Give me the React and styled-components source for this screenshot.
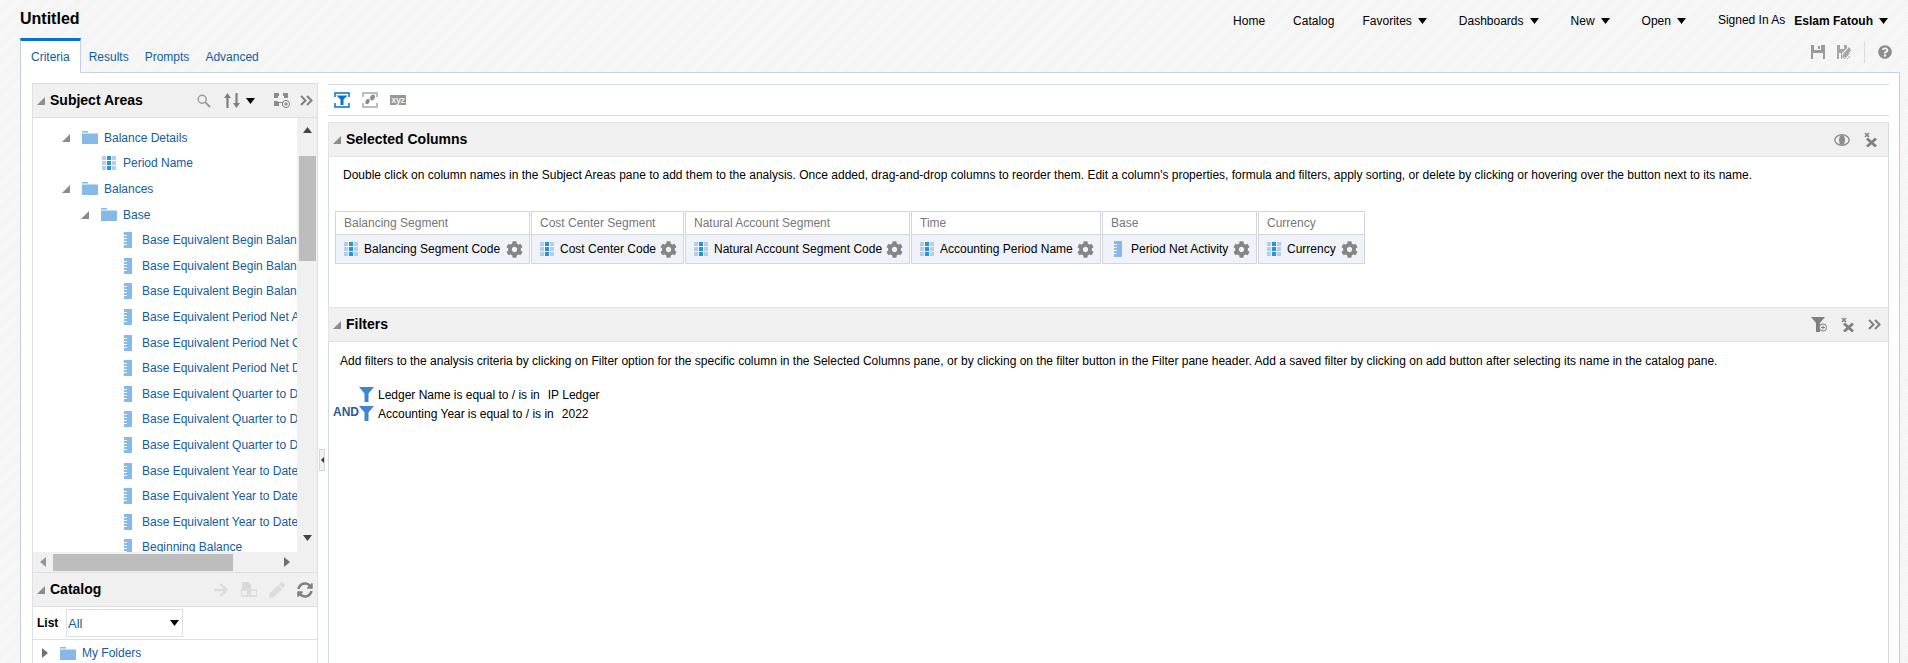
import React from 'react'
import styled, { createGlobalStyle } from 'styled-components'
import { FaCog, FaSyncAlt, FaPen, FaArrowRight, FaQuestionCircle } from 'react-icons/fa'

const GlobalStyle = createGlobalStyle`
  html, body {
    margin: 0;
    padding: 0;
    height: 100%;
    overflow: hidden;
  }
  body {
    font-family: "Liberation Sans", Arial, sans-serif;
    font-size: 12px;
    color: #000;
  }
`

/* ---------- drawn icons ---------- */

const Corner = ({ size = 8 }) => (
  <svg width={size} height={size} viewBox="0 0 8 8">
    <polygon points="8,0 8,8 0,8" fill="#8c8c8c" />
  </svg>
)

const RightArrow = () => (
  <svg width="6" height="10" viewBox="0 0 6 10">
    <polygon points="0,0 6,5 0,10" fill="#6f6f6f" />
  </svg>
)

const Caret = ({ color = '#000', up }) => (
  <svg width="9" height="6" viewBox="0 0 9 6">
    <polygon points={up ? '0,6 9,6 4.5,0' : '0,0 9,0 4.5,6'} fill={color} />
  </svg>
)

const Folder = () => (
  <svg width="16" height="13" viewBox="0 0 16 13">
    <rect x="0" y="0" width="6" height="1.5" fill="#85b9e8" />
    <rect x="0" y="2.5" width="16" height="10.5" fill="#85b9e8" />
  </svg>
)

const Grid = () => (
  <svg width="14" height="14" viewBox="0 0 14 14">
    {[0, 5, 10].map(x =>
      [0, 5, 10].map(y => (
        <rect
          key={`${x}-${y}`}
          x={x}
          y={y}
          width="4"
          height="4"
          fill={x === 5 ? '#2496d8' : '#b3cee6'}
        />
      ))
    )}
  </svg>
)

const Measure = () => (
  <svg width="8" height="16" viewBox="0 0 8 16">
    <rect width="8" height="16" fill="#85b9e8" />
    <rect y="3" width="3" height="1" fill="#fff" />
    <rect y="6" width="3" height="1" fill="#fff" />
    <rect y="9" width="3" height="1" fill="#fff" />
    <rect y="12" width="3" height="1" fill="#fff" />
  </svg>
)

const Funnel = () => (
  <svg width="15" height="15" viewBox="0 0 15 15">
    <polygon points="0,0 15,0 9.5,6.5 9.5,15 5.5,15 5.5,6.5" fill="#3b86cf" />
  </svg>
)

const FunnelAdd = () => (
  <svg width="16" height="15" viewBox="0 0 16 15">
    <polygon points="0,0 14,0 9,6 9,15 5,15 5,6" fill="#808080" />
    <circle cx="12" cy="10.5" r="3.6" fill="#f0f0f0" stroke="#808080" strokeWidth="1" />
    <path d="M10 10.5h4M12 8.5v4" stroke="#808080" strokeWidth="1" />
  </svg>
)

const Search = () => (
  <svg width="14" height="14" viewBox="0 0 14 14" fill="none" stroke="#999">
    <circle cx="5.2" cy="5.2" r="4" strokeWidth="1.4" />
    <path d="M8.4 8.4L13 13" strokeWidth="2" />
  </svg>
)

const Sort = () => (
  <svg width="16" height="15" viewBox="0 0 16 15" fill="#808080">
    <path d="M3.5 0L7 5H4.6V15H2.4V5H0z" />
    <path d="M12.5 15L9 10H11.4V0H13.6V10H16z" />
  </svg>
)

const AddSelect = () => (
  <svg width="16" height="15" viewBox="0 0 16 15">
    <rect width="14" height="13" fill="#8c8c8c" />
    <rect x="4" y="3" width="6" height="6" fill="#f0f0f0" />
    <path d="M5 0h4v3H5zM0 5h4v3H0zM10 5h4v3h-4zM5 10h3v3H5z" fill="#f0f0f0" />
    <circle cx="12" cy="11" r="3.6" fill="#f0f0f0" stroke="#808080" />
    <path d="M10 11h4M12 9v4" stroke="#808080" />
  </svg>
)

const Chevrons = () => (
  <svg width="13" height="11" viewBox="0 0 13 11" fill="none" stroke="#808080" strokeWidth="2">
    <path d="M1 1l4.5 4.5L1 10M7 1l4.5 4.5L7 10" />
  </svg>
)

const FilterTool = () => (
  <svg width="16" height="16" viewBox="0 0 16 16">
    <path d="M1 5V1H15V5M1 11V15H15V11" fill="none" stroke="#0572ce" strokeWidth="1.5" />
    <polygon points="2.5,3.5 13.5,3.5 9.5,7.5 9.5,13 6.5,13 6.5,7.5" fill="#0572ce" />
  </svg>
)

const StepsTool = () => (
  <svg width="16" height="16" viewBox="0 0 16 16">
    <path d="M1 5V1H15V5M1 11V15H15V11" fill="none" stroke="#a8a8a8" strokeWidth="1.5" />
    <ellipse cx="10.5" cy="5.5" rx="2.2" ry="3" transform="rotate(25 10.5 5.5)" fill="#8c8c8c" />
    <ellipse cx="5.5" cy="9.5" rx="2" ry="2.8" transform="rotate(25 5.5 9.5)" fill="#8c8c8c" />
  </svg>
)

const Floppy = () => (
  <svg width="14" height="14" viewBox="0 0 14 14">
    <path d="M0 0h14v14H0z" fill="#9a9a9a" />
    <rect x="3" y="0" width="7" height="5" fill="#f4f4f4" />
    <rect x="7" y="1" width="2" height="3" fill="#9a9a9a" />
    <rect x="2" y="8" width="10" height="6" fill="#f4f4f4" />
  </svg>
)

const FloppyEdit = () => (
  <svg width="14" height="14" viewBox="0 0 14 14">
    <path d="M0 0h10v3L5 8v6H0z" fill="#a6a6a6" />
    <rect x="3" y="0" width="4" height="4" fill="#f4f4f4" />
    <rect x="2" y="8" width="2" height="6" fill="#f4f4f4" />
    <path d="M12 2L6 9l-1 4 4-1 5-7z" fill="#a6a6a6" />
    <path d="M7 14l6-6M10 14l3-3" stroke="#a6a6a6" />
  </svg>
)

const EyeRings = () => (
  <svg width="16" height="12" viewBox="0 0 16 12">
    <ellipse cx="8" cy="6" rx="7.2" ry="5.2" fill="none" stroke="#8c8c8c" strokeWidth="1.4" />
    <ellipse cx="8" cy="6" rx="3" ry="5" fill="#8c8c8c" />
  </svg>
)

const RemoveAll = () => (
  <svg width="13" height="15" viewBox="0 0 13 15" fill="none" stroke="#808080">
    <path d="M1 1l4 4M5 1L1 5" strokeWidth="1.5" />
    <path d="M3 6.5l9 8M12 6.5l-9 8" strokeWidth="2.8" />
  </svg>
)

const ReportDoc = () => (
  <svg width="16" height="15" viewBox="0 0 16 15">
    <path d="M1 0h6l3 3v4H1z" fill="#d8d8d8" />
    <rect x="0" y="8" width="7" height="6" fill="none" stroke="#d8d8d8" strokeWidth="1.5" />
    <rect x="9" y="8" width="7" height="6" fill="none" stroke="#d8d8d8" strokeWidth="1.5" />
    <rect x="6" y="9" width="4" height="1.5" fill="#d8d8d8" />
  </svg>
)

const Xyz = styled.span`
  display: inline-block;
  width: 16px;
  height: 10px;
  line-height: 10px;
  background: #999;
  color: #f0f0f0;
  font-size: 9px;
  font-weight: bold;
  text-align: center;
  letter-spacing: -0.3px;
`

/* ---------- page frame ---------- */

const Page = styled.div`
  height: 100vh;
  display: flex;
  flex-direction: column;
  padding: 0 8px 0 20px;
  box-sizing: border-box;
  background: repeating-linear-gradient(
    135deg,
    #f8f8f8 0,
    #f8f8f8 1px,
    #f3f3f3 1px,
    #f3f3f3 2px
  );
`

const TopBar = styled.header`
  height: 38px;
  flex: none;
  display: flex;
  align-items: flex-start;
  justify-content: space-between;
`

const Title = styled.h1`
  margin: 10px 0 0;
  font-size: 16px;
  line-height: 18px;
  font-weight: bold;
`

const Nav = styled.nav`
  display: flex;
  align-items: center;
  height: 41px;
  padding-right: 12px;
`

const NavItem = styled.span`
  display: flex;
  align-items: center;
  gap: 6px;
  padding: 0 ${p => (p.$caret ? '18px' : '14px')} 0 14px;
`

const SignedIn = styled.span`
  padding-left: 14px;
  margin-top: -1px;
`

const UserName = styled.span`
  display: flex;
  align-items: center;
  gap: 6px;
  margin-left: 9px;
  font-weight: bold;
`

const TabRow = styled.div`
  height: 34px;
  flex: none;
  display: flex;
  position: relative;
  z-index: 1;
`

const Tab = styled.div`
  display: flex;
  align-items: center;
  box-sizing: border-box;
  height: ${p => (p.$active ? '35px' : '34px')};
  padding: ${p => (p.$active ? '0 10px' : '3px 8px 0')};
  color: #145c9e;
  ${p =>
    p.$active &&
    `
    background: #fff;
    border-top: 3px solid #0572ce;
    border-left: 1px solid #c4d0df;
    border-right: 1px solid #c4d0df;
  `}
`

const Tools = styled.div`
  margin-left: auto;
  display: flex;
  align-items: center;
  height: 28px;
  padding-right: 8px;
  svg {
    display: block;
  }
`

const ToolGap = styled.span`
  width: 12px;
`

const ToolDivider = styled.span`
  width: 1px;
  height: 21px;
  margin: 0 13px;
  background: #dcdcdc;
`

const Workspace = styled.main`
  flex: 1;
  min-height: 0;
  display: flex;
  box-sizing: border-box;
  padding: 10px 10px 0 11px;
  background: #fff;
  border: 1px solid #c4d0df;
  border-bottom: 0;
`

/* ---------- left pane ---------- */

const LeftPane = styled.aside`
  width: 286px;
  flex: none;
  display: flex;
  flex-direction: column;
  box-sizing: border-box;
  border: 1px solid #dcdfe3;
  border-bottom: 0;
`

const PaneHead = styled.div`
  height: 34px;
  flex: none;
  box-sizing: border-box;
  display: flex;
  align-items: center;
  padding: 0 4px;
  background: #f0f0f0;
  border-bottom: 1px solid #dcdfe3;
`

const HeadTitle = styled.span`
  margin: 0 0 2px 5px;
  font-size: 14px;
  font-weight: bold;
`

const HeadIcons = styled.div`
  margin-left: auto;
  display: flex;
  align-items: center;
`

const HeadIcon = styled.span`
  display: flex;
  margin-left: ${p => p.$gap}px;
  color: ${p => p.$color};
  font-size: 16px;
`

const TreeArea = styled.div`
  height: 434px;
  flex: none;
  display: flex;
  overflow: hidden;
`

const TreeList = styled.div`
  flex: 1;
  min-width: 0;
  overflow: hidden;
  padding-top: 7px;
`

const TreeRow = styled.div`
  height: 25.6px;
  display: flex;
  align-items: center;
  padding-left: ${p => p.$indent}px;
  white-space: nowrap;
  color: #145c9e;
`

const Twist = styled.span`
  width: ${p => p.$width || 20}px;
  flex: none;
  display: flex;
`

const TreeIcon = styled.span`
  flex: none;
  display: flex;
  margin-right: ${p => p.$gap}px;
`

const VScroll = styled.div`
  width: 20px;
  flex: none;
  box-sizing: border-box;
  padding: 9px 1px 0 2px;
  background: #f0f0f0;
  display: flex;
  flex-direction: column;
  align-items: center;
`

const VThumb = styled.div`
  width: 17px;
  height: 105px;
  margin-top: 23px;
  background: #bdbdbd;
`

const VDown = styled.div`
  margin-top: 274px;
  display: flex;
`

const HScroll = styled.div`
  height: 21px;
  flex: none;
  display: flex;
  align-items: center;
  background: #f0f0f0;
  border-bottom: 1px solid #dcdfe3;
  box-sizing: border-box;
  padding-left: 7px;
`

const HThumb = styled.div`
  width: 180px;
  height: 17px;
  margin: 0 51px 0 7px;
  background: #bdbdbd;
`

const Flip = styled.span`
  display: flex;
  transform: ${p => (p.$left ? 'rotate(180deg)' : 'none')};
  opacity: ${p => (p.$left ? 0.7 : 1)};
`

const ListRow = styled.div`
  height: 33px;
  flex: none;
  box-sizing: border-box;
  display: flex;
  align-items: center;
  padding-left: 4px;
  border-bottom: 1px solid #dcdfe3;
`

const ListLabel = styled.label`
  width: 29px;
  font-weight: bold;
`

const FakeSelect = styled.div`
  width: 117px;
  height: 28px;
  box-sizing: border-box;
  display: flex;
  align-items: center;
  justify-content: space-between;
  padding: 0 3px 0 1px;
  border: 1px solid #dcdfe3;
  color: #145c9e;
  font-size: 13px;
`

const FolderRow = styled.div`
  flex: 1;
  display: flex;
  align-items: center;
  padding: 3px 0 0 9px;
  color: #145c9e;
`

/* ---------- right pane ---------- */

const Gutter = styled.div`
  width: 10px;
  flex: none;
  padding-top: 366px;
  box-sizing: border-box;
`

const SplitHandle = styled.div`
  width: 6px;
  height: 22px;
  margin-left: 1px;
  box-sizing: border-box;
  border: 1px solid #d4d8de;
  background: #f2f2f2;
  display: flex;
  align-items: center;
  justify-content: center;
  &::before {
    content: '';
    border: 3px solid transparent;
    border-right: 3px solid #333;
    border-left: 0;
  }
`

const RightPane = styled.section`
  flex: 1;
  min-width: 0;
  display: flex;
  flex-direction: column;
  padding-top: 1px;
`

const Toolbar = styled.div`
  height: 32px;
  flex: none;
  box-sizing: border-box;
  display: flex;
  align-items: center;
  gap: 12px;
  padding-left: 6px;
  border-top: 1px solid #d4dbe4;
  border-bottom: 1px solid #d4dbe4;
  svg {
    display: block;
  }
`

const PanelHead = styled.div`
  height: 35px;
  flex: none;
  box-sizing: border-box;
  display: flex;
  align-items: center;
  gap: 5px;
  padding: 0 ${p => p.$right}px 0 4px;
  background: #f0f0f0;
  border: 1px solid #e2e4e8;
  border-right-color: #d4dbe4;
  margin-top: ${p => p.$top || 0}px;
`

const PanelTitle = styled.span`
  margin-bottom: 2px;
  font-size: 14px;
  font-weight: bold;
`

const PanelIcons = styled.div`
  margin-left: auto;
  display: flex;
  align-items: center;
  gap: 14px;
  svg {
    display: block;
  }
`

const PanelBody = styled.div`
  box-sizing: border-box;
  height: ${p => p.$height};
  flex: ${p => (p.$grow ? 1 : 'none')};
  padding-top: ${p => p.$pad}px;
  border-left: 1px solid #d4dbe4;
  border-right: 1px solid #d4dbe4;
`

const Hint = styled.p`
  margin: 0 0 0 ${p => p.$left}px;
  line-height: 14px;
  white-space: nowrap;
`

const ColumnStrip = styled.div`
  display: flex;
  gap: 1px;
  margin: 29px 0 0 6px;
`

const ColumnCard = styled.div`
  width: ${p => p.$width}px;
  box-sizing: border-box;
  border: 1px solid #d5d5dc;
`

const ColumnFolder = styled.div`
  height: 23px;
  box-sizing: border-box;
  padding-left: 8px;
  line-height: 22px;
  color: #777;
  border-bottom: 1px solid #d5d5dc;
`

const ColumnItem = styled.div`
  height: 28px;
  display: flex;
  align-items: center;
  padding: 0 6px 0 8px;
  background: #eff2f8;
  white-space: nowrap;
  color: #000;
`

const ColumnIcon = styled.span`
  width: 14px;
  flex: none;
  display: flex;
  justify-content: center;
  margin-right: 6px;
`

const GearIcon = styled.span`
  margin-left: auto;
  display: flex;
  color: #858585;
  font-size: 17px;
`

const FilterRow = styled.div`
  height: 19px;
  display: flex;
  align-items: center;
  padding-left: 4px;
  white-space: nowrap;
  &:first-of-type {
    margin-top: 17px;
  }
`

const Conjunction = styled.span`
  width: 26px;
  flex: none;
  margin-top: -3px;
  color: #2c5a9e;
  font-weight: bold;
`

const FilterIcon = styled.span`
  flex: none;
  display: flex;
  margin-right: 4px;
`

const Operator = styled.span`
  margin: 1px 8px 0 3px;
`

const columns = [
  { folder: 'Balancing Segment', name: 'Balancing Segment Code', width: 195 },
  { folder: 'Cost Center Segment', name: 'Cost Center Code', width: 153 },
  { folder: 'Natural Account Segment', name: 'Natural Account Segment Code', width: 225 },
  { folder: 'Time', name: 'Accounting Period Name', width: 190 },
  { folder: 'Base', name: 'Period Net Activity', width: 155, measure: true },
  { folder: 'Currency', name: 'Currency', width: 107 }
]

const measures = [
  'Base Equivalent Begin Balance',
  'Base Equivalent Begin Balance Credit',
  'Base Equivalent Begin Balance Debit',
  'Base Equivalent Period Net Activity',
  'Base Equivalent Period Net Credit',
  'Base Equivalent Period Net Debit',
  'Base Equivalent Quarter to Date',
  'Base Equivalent Quarter to Date Credit',
  'Base Equivalent Quarter to Date Debit',
  'Base Equivalent Year to Date',
  'Base Equivalent Year to Date Credit',
  'Base Equivalent Year to Date Debit',
  'Beginning Balance'
]

const navItems = ['Favorites', 'Dashboards', 'New', 'Open']

export default function App() {
  return (
    <Page>
      <GlobalStyle />
      <TopBar>
        <Title>Untitled</Title>
        <Nav>
          <NavItem>Home</NavItem>
          <NavItem>Catalog</NavItem>
          {navItems.map(item => (
            <NavItem $caret key={item}>
              {item} <Caret />
            </NavItem>
          ))}
          <SignedIn>Signed In As</SignedIn>
          <UserName>
            Eslam Fatouh <Caret />
          </UserName>
        </Nav>
      </TopBar>

      <TabRow>
        <Tab $active>Criteria</Tab>
        <Tab>Results</Tab>
        <Tab>Prompts</Tab>
        <Tab>Advanced</Tab>
        <Tools>
          <Floppy />
          <ToolGap />
          <FloppyEdit />
          <ToolDivider />
          <FaQuestionCircle size={14} color="#8c8c8c" />
        </Tools>
      </TabRow>

      <Workspace>
        <LeftPane>
          <PaneHead>
            <Corner />
            <HeadTitle>Subject Areas</HeadTitle>
            <HeadIcons>
              <HeadIcon $gap={0}><Search /></HeadIcon>
              <HeadIcon $gap={13}><Sort /></HeadIcon>
              <HeadIcon $gap={6}><Caret /></HeadIcon>
              <HeadIcon $gap={19}><AddSelect /></HeadIcon>
              <HeadIcon $gap={10}><Chevrons /></HeadIcon>
            </HeadIcons>
          </PaneHead>

          <TreeArea>
            <TreeList>
              <TreeRow $indent={29}>
                <Twist><Corner /></Twist>
                <TreeIcon $gap={6}><Folder /></TreeIcon>
                Balance Details
              </TreeRow>
              <TreeRow $indent={69}>
                <TreeIcon $gap={7}><Grid /></TreeIcon>
                Period Name
              </TreeRow>
              <TreeRow $indent={29}>
                <Twist><Corner /></Twist>
                <TreeIcon $gap={6}><Folder /></TreeIcon>
                Balances
              </TreeRow>
              <TreeRow $indent={48}>
                <Twist><Corner /></Twist>
                <TreeIcon $gap={6}><Folder /></TreeIcon>
                Base
              </TreeRow>
              {measures.map(name => (
                <TreeRow $indent={91} key={name}>
                  <TreeIcon $gap={10}><Measure /></TreeIcon>
                  {name}
                </TreeRow>
              ))}
            </TreeList>
            <VScroll>
              <Caret up color="#444" />
              <VThumb />
              <VDown><Caret color="#444" /></VDown>
            </VScroll>
          </TreeArea>

          <HScroll>
            <Flip $left><RightArrow /></Flip>
            <HThumb />
            <Flip><RightArrow /></Flip>
          </HScroll>

          <PaneHead>
            <Corner />
            <HeadTitle>Catalog</HeadTitle>
            <HeadIcons>
              <HeadIcon $gap={0} $color="#dcdcdc"><FaArrowRight /></HeadIcon>
              <HeadIcon $gap={12}><ReportDoc /></HeadIcon>
              <HeadIcon $gap={12} $color="#dcdcdc"><FaPen /></HeadIcon>
              <HeadIcon $gap={12} $color="#808080"><FaSyncAlt /></HeadIcon>
            </HeadIcons>
          </PaneHead>

          <ListRow>
            <ListLabel>List</ListLabel>
            <FakeSelect>
              All
              <Caret />
            </FakeSelect>
          </ListRow>

          <FolderRow>
            <Twist $width={18}>
              <RightArrow />
            </Twist>
            <TreeIcon $gap={6}><Folder /></TreeIcon>
            My Folders
          </FolderRow>
        </LeftPane>

        <Gutter>
          <SplitHandle />
        </Gutter>

        <RightPane>
          <Toolbar>
            <FilterTool />
            <StepsTool />
            <Xyz>xyz</Xyz>
          </Toolbar>

          <PanelHead $top={6} $right={11}>
            <Corner />
            <PanelTitle>Selected Columns</PanelTitle>
            <PanelIcons>
              <EyeRings />
              <RemoveAll />
            </PanelIcons>
          </PanelHead>
          <PanelBody $height="150px" $pad={11}>
            <Hint $left={14}>
              Double click on column names in the Subject Areas pane to add them to the analysis. Once added, drag-and-drop columns to reorder them. Edit a column's properties, formula and filters, apply sorting, or delete by clicking or hovering over the button next to its name.
            </Hint>
            <ColumnStrip>
              {columns.map(col => (
                <ColumnCard $width={col.width} key={col.name}>
                  <ColumnFolder>{col.folder}</ColumnFolder>
                  <ColumnItem>
                    <ColumnIcon>{col.measure ? <Measure /> : <Grid />}</ColumnIcon>
                    {col.name}
                    <GearIcon><FaCog /></GearIcon>
                  </ColumnItem>
                </ColumnCard>
              ))}
            </ColumnStrip>
          </PanelBody>

          <PanelHead $right={7}>
            <Corner />
            <PanelTitle>Filters</PanelTitle>
            <PanelIcons>
              <FunnelAdd />
              <RemoveAll />
              <Chevrons />
            </PanelIcons>
          </PanelHead>
          <PanelBody $grow $pad={12}>
            <Hint $left={11}>
              Add filters to the analysis criteria by clicking on Filter option for the specific column in the Selected Columns pane, or by clicking on the filter button in the Filter pane header. Add a saved filter by clicking on add button after selecting its name in the catalog pane.
            </Hint>
            <FilterRow>
              <Conjunction />
              <FilterIcon><Funnel /></FilterIcon>
              Ledger Name
              <Operator>is equal to / is in</Operator>
              IP Ledger
            </FilterRow>
            <FilterRow>
              <Conjunction>AND</Conjunction>
              <FilterIcon><Funnel /></FilterIcon>
              Accounting Year
              <Operator>is equal to / is in</Operator>
              2022
            </FilterRow>
          </PanelBody>
        </RightPane>
      </Workspace>
    </Page>
  )
}
